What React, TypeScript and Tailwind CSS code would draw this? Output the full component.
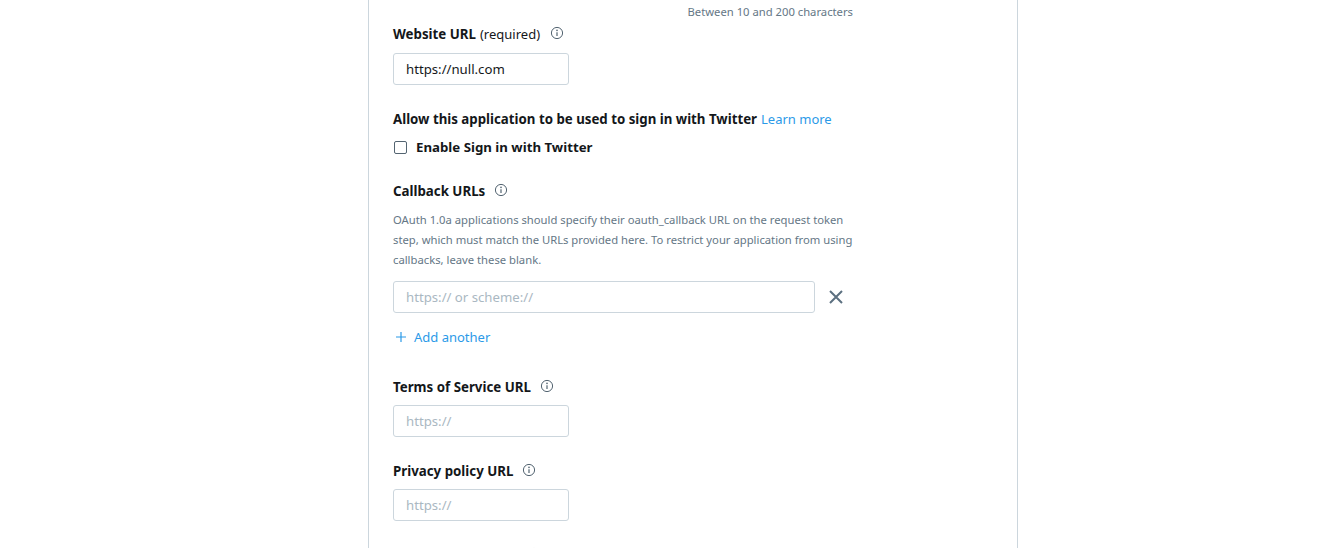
import React from "react";

function Info() {
  return (
    <svg width="14" height="14" viewBox="0 0 14 14" fill="none" className="block">
      <circle cx="7" cy="7" r="5.6" stroke="#536471" strokeWidth="1" />
      <path d="M7 6.2V10" stroke="#536471" strokeWidth="1.2" />
      <circle cx="7" cy="4.4" r="0.8" fill="#536471" />
    </svg>
  );
}

function Label({ children }: { children: React.ReactNode }) {
  return (
    <div className="flex h-5 items-center text-[13.3px] leading-5 text-[#14171a]">
      <span className="font-bold">{children}</span>
      <span className="-mt-[2px] ml-[9px]">
        <Info />
      </span>
    </div>
  );
}

function TextBox({ placeholder, value, wide }: { placeholder?: string; value?: string; wide?: boolean }) {
  return (
    <input
      readOnly
      placeholder={placeholder}
      value={value}
      className={`block h-8 rounded-[3px] border border-[#ccd6dd] bg-white px-3 text-[13.2px] text-[#14171a] outline-none placeholder:text-[#aab8c2] ${wide ? "w-[422px]" : "w-[176px]"}`}
    />
  );
}

export default function App() {
  return (
    <div className="h-[548px] overflow-hidden bg-white font-['Noto_Sans','Open_Sans',sans-serif]">
      <div className="ml-[368px] h-[548px] w-[650px] border-x border-[#ccd6dd] pl-6 pt-[2px]">
        <div className="w-[460px]">
          <p className="h-5 text-right text-[11.25px] leading-5 text-[#657786]">Between 10 and 200 characters</p>

          <div className="mt-[2px] flex h-5 items-center text-[13.3px] leading-5 text-[#14171a]">
            <span className="font-bold">Website URL</span>
            <span className="ml-1 text-[13px]">(required)</span>
            <span className="-mt-[2px] ml-[10px]"><Info /></span>
          </div>
          <div className="mt-[9px]"><TextBox value="https://null.com" /></div>

          <div className="mt-6 flex h-5 items-center text-[13.28px] leading-5">
            <span className="font-bold text-[#14171a]">Allow this application to be used to sign in with Twitter</span>
            <a className="ml-[4px] text-[13px] text-[#2b9ae8]">Learn more</a>
          </div>
          <label className="mt-2 flex h-5 items-center text-[13.25px] font-bold leading-5 text-[#14171a]">
            <input type="checkbox" readOnly className="ml-[1px] mr-[9px] h-[13px] w-[13px] appearance-none rounded-[2px] border border-[#536471] bg-white" />
            Enable Sign in with Twitter
          </label>

          <div className="mt-[24px]"><Label>Callback URLs</Label></div>
          <p className="mt-[9px] text-[11.25px] leading-5 text-[#657786]">
            OAuth 1.0a applications should specify their oauth_callback URL on the request token step, which must match the URLs provided here. To restrict your application from using callbacks, leave these blank.
          </p>
          <div className="mt-[11px] flex items-center">
            <TextBox wide placeholder="https:// or scheme://" />
            <svg width="14" height="14" viewBox="0 0 14 14" fill="none" className="ml-[14px]">
              <path d="M1 1L13 13M13 1L1 13" stroke="#5c7080" strokeWidth="2" />
            </svg>
          </div>
          <div className="mt-[14px] flex h-5 items-center text-[13px] leading-5 text-[#2b9ae8]">
            <svg width="12" height="12" viewBox="0 0 12 12" fill="none" className="ml-[2px] mr-[7px]">
              <path d="M6 1V11M1 6H11" stroke="#2b9ae8" strokeWidth="1.2" />
            </svg>
            Add another
          </div>

          <div className="mt-[30px]"><Label>Terms of Service URL</Label></div>
          <div className="mt-2"><TextBox placeholder="https://" /></div>

          <div className="mt-6"><Label>Privacy policy URL</Label></div>
          <div className="mt-2"><TextBox placeholder="https://" /></div>

          <div className="ml-[134px] mt-[26px]"><Info /></div>
        </div>
      </div>
    </div>
  );
}
